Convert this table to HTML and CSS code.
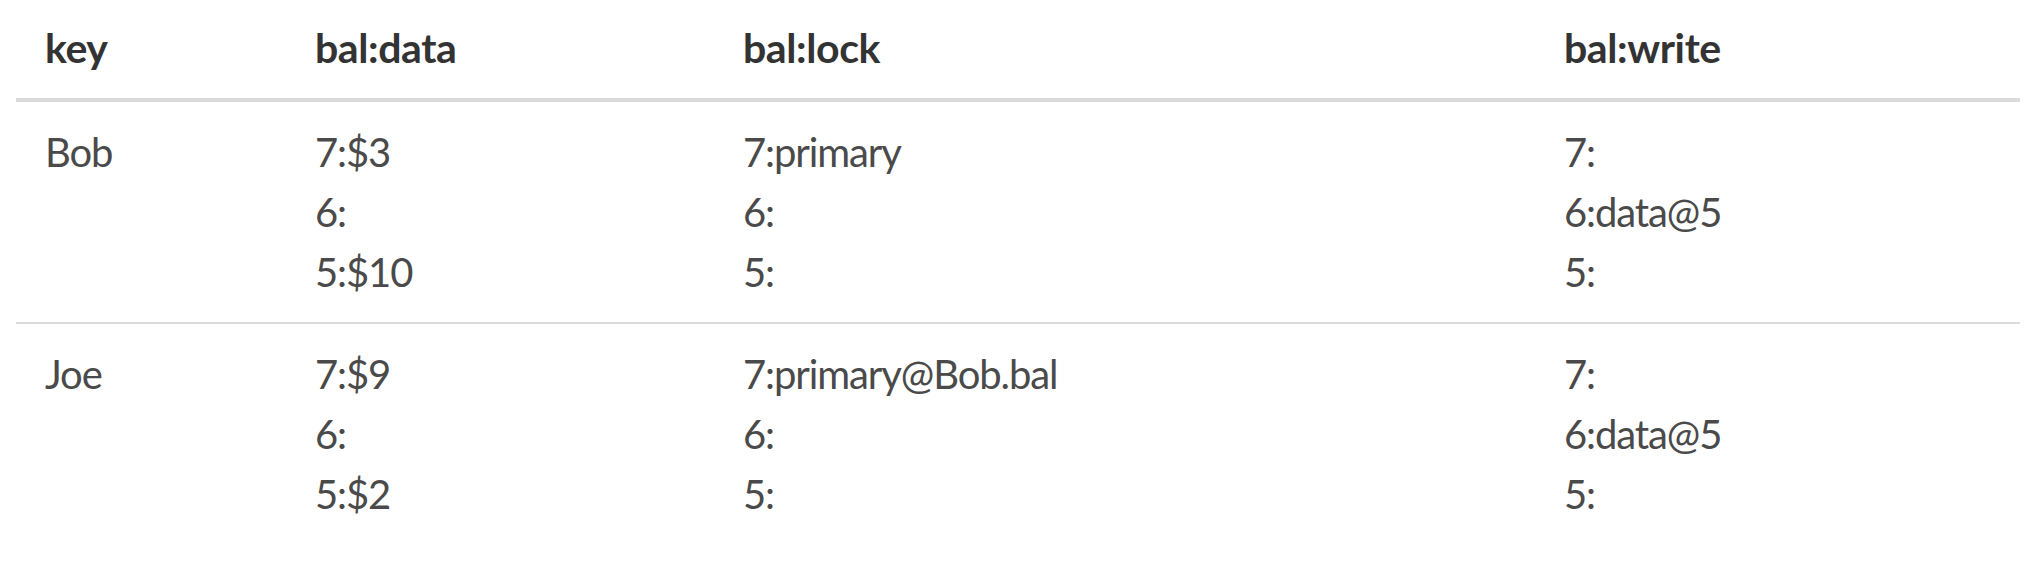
FILE: index.html
```html
<!DOCTYPE html>
<html lang="en">
<head>
<meta charset="utf-8">
<title>bal table</title>
<link rel="stylesheet" href="styles.css">
</head>
<body>
<div class="page">
  <table class="kv">
    <colgroup>
      <col class="c-key">
      <col class="c-data">
      <col class="c-lock">
      <col class="c-write">
    </colgroup>
    <thead>
      <tr>
        <th>key</th>
        <th>bal:data</th>
        <th>bal:lock</th>
        <th>bal:write</th>
      </tr>
    </thead>
    <tbody>
      <tr>
        <td>Bob</td>
        <td><div>7:$3</div><div>6:</div><div>5:$10</div></td>
        <td><div>7:primary</div><div>6:</div><div>5:</div></td>
        <td><div>7:</div><div>6:data@5</div><div>5:</div></td>
      </tr>
      <tr>
        <td>Joe</td>
        <td><div>7:$9</div><div>6:</div><div>5:$2</div></td>
        <td><div>7:primary@Bob.bal</div><div>6:</div><div>5:</div></td>
        <td><div>7:</div><div>6:data@5</div><div>5:</div></td>
      </tr>
    </tbody>
  </table>
</div>
</body>
</html>
```
FILE: styles.css
```css
html, body {
  margin: 0;
  padding: 0;
  background: #ffffff;
}
body {
  font-family: Lato, "Open Sans", sans-serif;
}
.page {
  padding: 0 18px 0 16px;
}
.kv {
  width: 100%;
  table-layout: fixed;
  border-collapse: separate;
  border-spacing: 0;
}
.c-key { width: 270px; }
.c-data { width: 428px; }
.c-lock { width: 821px; }
.kv th {
  text-align: left;
  font-weight: 700;
  font-size: 41px;
  line-height: 60px;
  color: #333333;
  padding: 18px 0 20px 29px;
  border-bottom: 4px solid #dadada;
  letter-spacing: -0.4px;
}
.kv td {
  text-align: left;
  vertical-align: top;
  font-weight: 400;
  font-size: 40px;
  line-height: 60px;
  color: #4a4a4a;
  padding: 20px 0 20px 29px;
  border-bottom: 2px solid #dcdcdc;
  letter-spacing: -1.1px;
  white-space: nowrap;
}
.kv tbody tr:last-child td {
  border-bottom: none;
}
```
